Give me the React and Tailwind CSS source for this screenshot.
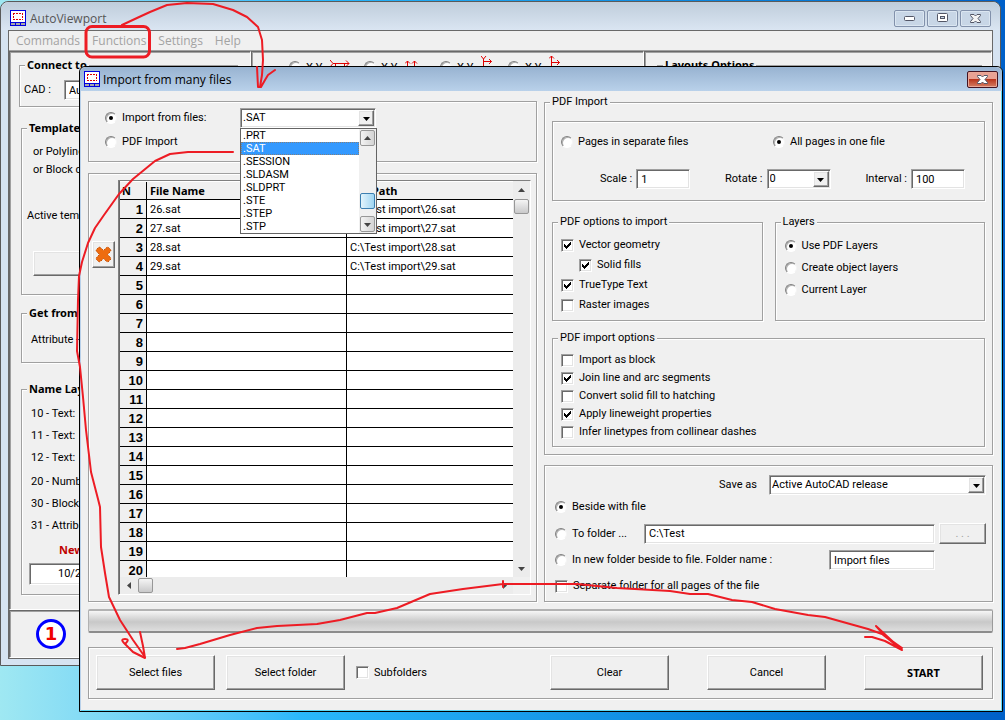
import React, { useState } from "react";

const SUNKEN =
  "border border-t-[#a0a0a0] border-l-[#a0a0a0] border-r-white border-b-white shadow-[inset_1px_1px_0_#696969,inset_-1px_-1px_0_#e3e3e3]";
const RAISED =
  "border border-t-white border-l-white border-r-[#696969] border-b-[#696969] shadow-[inset_-1px_-1px_0_#a0a0a0,inset_1px_1px_0_#e3e3e3]";
const ETCHED =
  "border border-[#a0a0a0] shadow-[1px_1px_0_#fff,inset_1px_1px_0_#fff]";
const BOLD = "font-['Noto_Sans','Open_Sans',sans-serif] font-bold";
const CAPTION = "font-['Open_Sans','Noto_Sans',sans-serif] text-[12px]";

const formats = [
  ".PRT",
  ".SAT",
  ".SESSION",
  ".SLDASM",
  ".SLDPRT",
  ".STE",
  ".STEP",
  ".STP",
];

const files = [
  { name: "26.sat", path: "C:\\Test import\\26.sat" },
  { name: "27.sat", path: "C:\\Test import\\27.sat" },
  { name: "28.sat", path: "C:\\Test import\\28.sat" },
  { name: "29.sat", path: "C:\\Test import\\29.sat" },
];

const rows = Array.from({ length: 20 }, (_, i) => files[i] || {});

const AppIcon = () => (
  <svg width="16" height="16" viewBox="0 0 16 16" shapeRendering="crispEdges">
    <rect x="0.5" y="0.5" width="15" height="15" fill="#fff" stroke="#0000e0" />
    <path
      d="M3 3.500h2M6 3.500h2M9 3.500h2M12 3.500h1M3 9.500h2M6 9.500h2M9 9.500h2M12 9.500h1M3.500 4v1M3.500 6v2M12.500 4v1M12.500 6v2"
      stroke="#e00000"
    />
    <path d="M0 12.500h16" stroke="#0000e0" />
    <path d="M1 14h4M6 14h4M11 14h4" stroke="#a8a8a8" strokeWidth="2" />
    <path d="M5.500 12v4M10.500 12v4" stroke="#0000e0" />
  </svg>
);

const Arrow = ({ dir = "down", size = 7 }) => {
  const d = {
    down: "M0 2h7L3.5 6z",
    up: "M0 5h7L3.5 1z",
    left: "M5 0v7L1 3.5z",
    right: "M2 0v7l4-3.5z",
  };
  return (
    <svg width={size} height={size} viewBox="0 0 7 7" className="shrink-0">
      <path d={d[dir]} fill="currentColor" />
    </svg>
  );
};

const CloseGlyph = ({ fill }) => (
  <svg width="13" height="11" viewBox="0 0 13 11">
    <path
      d="M1.500 1.500h3.500l1.500 1.500 1.500-1.500h3.500v1L9 5.500l2.500 3v1H8L6.500 8 5 9.500H1.500v-1L4 5.500l-2.500-3z"
      fill={fill}
      stroke="#535666"
    />
  </svg>
);

const Check = ({ label, checked = false, className = "" }) => (
  <label className={`flex items-center gap-[5px] whitespace-nowrap ${className}`}>
    <span className="relative h-[13px] w-[13px] shrink-0">
      <input
        type="checkbox"
        defaultChecked={checked}
        className={`peer block h-[13px] w-[13px] appearance-none bg-white ${SUNKEN}`}
      />
      <svg
        viewBox="0 0 13 13"
        shapeRendering="crispEdges"
        className="pointer-events-none absolute inset-0 hidden peer-checked:block"
      >
        <path
          d="M3 5h1v1h1v1h1v-1h1v-1h1v-1h1v-1h1v3h-1v1h-1v1h-1v1h-1v1h-1v-1h-1v-1h-1z"
          fill="#000"
        />
      </svg>
    </span>
    {label}
  </label>
);

const Radio = ({ label, name, checked = false, className = "" }) => (
  <label className={`flex items-center gap-[5px] whitespace-nowrap ${className}`}>
    <span className="relative h-3 w-3 shrink-0">
      <input
        type="radio"
        name={name}
        defaultChecked={checked}
        className="peer block h-3 w-3 appearance-none rounded-full border border-t-[#808080] border-r-[#f4f4f4] border-b-white border-l-[#808080] bg-white shadow-[inset_1px_1px_0_#b0b0b0]"
      />
      <span className="pointer-events-none absolute top-1 left-1 hidden h-1 w-1 rounded-full bg-black peer-checked:block" />
    </span>
    {label}
  </label>
);

// Padding lives on the inner div so that the legend always starts at the same inset
const Group = ({ title, bold, className = "", inner = "", children }) => (
  <fieldset className={`min-w-0 ${ETCHED} ${className}`}>
    <legend
      className={`ml-[5px] bg-[#f0f0f0] px-[2px] leading-[14px] whitespace-nowrap ${bold ? BOLD : ""}`}
    >
      {title}
    </legend>
    <div className={inner}>{children}</div>
  </fieldset>
);

const Combo = ({ options, label, className = "" }) => (
  <span className={`relative block h-5 bg-white ${SUNKEN} ${className}`}>
    <select
      aria-label={label}
      defaultValue={options[0]}
      className="block h-full w-full appearance-none bg-transparent pl-[2px] outline-none"
    >
      {options.map((option) => (
        <option key={option}>{option}</option>
      ))}
    </select>
    <span
      className={`pointer-events-none absolute top-[1px] right-[1px] bottom-[1px] flex w-4 items-center justify-center bg-[#f0f0f0] ${RAISED}`}
    >
      <Arrow />
    </span>
  </span>
);

const TextBox = ({ className = "", ...props }) => (
  <input
    type="text"
    className={`h-5 min-w-0 bg-white pl-1 outline-none ${SUNKEN} ${className}`}
    {...props}
  />
);

const PushButton = ({ className = "", children }) => (
  <button
    type="button"
    className={`h-[35px] w-[119px] shrink-0 bg-[#f0f0f0] ${RAISED} ${className}`}
  >
    {children}
  </button>
);

const Thumb = ({ className = "" }) => (
  <span
    className={`block h-[15px] w-[15px] rounded-xs border border-[#979797] bg-linear-to-b from-[#f5f5f5] to-[#c9c9ca] ${className}`}
  />
);

const FormatList = () => {
  const [selected, setSelected] = useState(".SAT");

  return (
    <div className="absolute top-full left-0 z-10 flex w-[137px] border border-[#646464] bg-white">
      <ul role="listbox" aria-label="File format" className="min-w-0 flex-1">
        {formats.map((format) => (
          <li
            key={format}
            role="option"
            aria-selected={format === selected}
            onClick={() => setSelected(format)}
            className={`h-[13px] pl-[2px] leading-[13px] ${
              format === selected
                ? "bg-[#3399ff] text-white outline-1 -outline-offset-1 outline-dotted outline-[#cc6600]/50"
                : ""
            }`}
          >
            {format}
          </li>
        ))}
      </ul>
      <div className="flex w-[17px] flex-col items-center justify-between bg-[#f0f0f0] py-[1px] text-[#444]">
        <button type="button" aria-label="Scroll up" className="flex h-4 w-[15px] items-center justify-center rounded-xs border border-[#979797] bg-linear-to-r from-[#f3f3f3] to-[#d4d4d4]">
          <Arrow dir="up" />
        </button>
        <span className="mt-10 block h-4 w-[15px] rounded-xs border border-[#3c7fb1] bg-linear-to-r from-[#e3f4fc] to-[#9fd5f2]" />
        <button type="button" aria-label="Scroll down" className="flex h-4 w-[15px] items-center justify-center rounded-xs border border-[#979797] bg-linear-to-r from-[#f3f3f3] to-[#d4d4d4]">
          <Arrow />
        </button>
      </div>
    </div>
  );
};

const FileTable = () => (
  <div className="min-w-0 flex-1 border-t border-l border-t-[#808080] border-l-[#808080] border-r border-b border-r-white border-b-white pl-[1px] shadow-[inset_1px_1px_0_#696969]">
    <div className="flex">
      <div className="h-[396px] min-w-0 flex-1 overflow-hidden bg-white pt-[1px]">
        <table className="w-full table-fixed border-separate border-spacing-0 text-left">
          <thead>
            <tr className={`bg-[#f0f0f0] ${BOLD}`}>
              <th className="h-[18px] w-[27px] border-r border-b border-black pl-[2px]">N</th>
              <th className="w-[200px] border-r border-b border-black pl-[3px]">File Name</th>
              <th className="border-b border-black pl-[3px]">File Path</th>
            </tr>
          </thead>
          <tbody>
            {rows.map((file, i) => (
              <tr key={i}>
                <td className="h-[19px] border-r border-b border-black bg-[#f0f0f0] pt-[1px] pr-[3px] text-right font-['Liberation_Sans',Arial,sans-serif] text-[13px] leading-[17px] font-bold">
                  {i + 1}
                </td>
                <td className="border-r border-b border-black pt-[1px] pl-[3px]">{file.name}</td>
                <td className="border-b border-black pt-[1px] pl-[3px]">{file.path}</td>
              </tr>
            ))}
          </tbody>
        </table>
      </div>
      <div className="flex w-[17px] flex-col items-center bg-[#ececec] text-[#444]">
        <button type="button" aria-label="Scroll up" className="flex h-[18px] w-full items-center justify-center">
          <Arrow dir="up" />
        </button>
        <Thumb />
        <button type="button" aria-label="Scroll down" className="mt-auto flex h-[17px] w-full items-center justify-center">
          <Arrow />
        </button>
      </div>
    </div>
    <div className="mr-[17px] flex h-[17px] items-center bg-[#ececec] text-[#444]">
      <button type="button" aria-label="Scroll left" className="flex h-full w-[18px] items-center justify-center">
        <Arrow dir="left" />
      </button>
      <Thumb />
      <button type="button" aria-label="Scroll right" className="ml-auto flex h-full w-[17px] items-center justify-center">
        <Arrow dir="right" />
      </button>
    </div>
  </div>
);

const PdfImport = () => (
  <Group title="PDF Import" inner="px-[7px] pt-3 pb-[7px]">
    <div className={`pt-[10px] pr-[19px] pb-[11px] pl-2 ${ETCHED}`}>
      <div className="flex h-5 items-center">
        <Radio name="pages" label="Pages in separate files" className="w-[212px]" />
        <Radio name="pages" label="All pages in one file" checked />
      </div>
      <div className="mt-[17px] flex items-center justify-between pl-[39px]">
        <label className="flex items-center gap-1">
          Scale : <TextBox defaultValue="1" className="w-[54px]" />
        </label>
        <label className="flex items-center gap-1">
          Rotate : <Combo label="Rotate" options={["0", "90", "180"]} className="w-16" />
        </label>
        <label className="flex items-center gap-1">
          Interval : <TextBox defaultValue="100" className="w-[54px]" />
        </label>
      </div>
    </div>

    <div className="mt-[14px] grid grid-cols-2 gap-3">
      <Group title="PDF options to import" inner="px-2 pt-[6px] pb-[5px]">
        <Check label="Vector geometry" checked className="h-5" />
        <Check label="Solid fills" checked className="ml-[18px] h-5" />
        <Check label="TrueType Text" checked className="h-5" />
        <Check label="Raster images" className="h-5" />
      </Group>
      <Group title="Layers" inner="px-[9px] pt-[6px] pb-[5px]">
        <Radio name="layers" label="Use PDF Layers" checked className="h-[22px]" />
        <Radio name="layers" label="Create object layers" className="h-[22px]" />
        <Radio name="layers" label="Current Layer" className="h-[22px]" />
      </Group>
    </div>

    <Group title="PDF import options" className="mt-[10px]" inner="px-2 pt-[6px] pb-[5px]">
      <Check label="Import as block" className="h-[18px]" />
      <Check label="Join line and arc segments" checked className="h-[18px]" />
      <Check label="Convert solid fill to hatching" className="h-[18px]" />
      <Check label="Apply lineweight properties" checked className="h-[18px]" />
      <Check label="Infer linetypes from collinear dashes" className="h-[18px]" />
    </Group>
  </Group>
);

const SaveOptions = () => (
  <div className={`mt-[10px] pt-[9px] pr-[6px] pb-[5px] pl-[10px] ${ETCHED}`}>
    <div className="flex items-center justify-end gap-3">
      <span>Save as</span>
      <Combo label="Save as" options={["Active AutoCAD release"]} className="w-[217px]" />
    </div>
    <Radio name="target" label="Beside with file" checked className="mt-[2px] h-5" />
    <div className="mt-[6px] flex items-center gap-1">
      <Radio name="target" label="To folder ..." className="w-[85px]" />
      <TextBox aria-label="Folder" defaultValue="C:\Test" className="flex-1" />
      <button type="button" className={`h-[21px] w-[47px] bg-[#f0f0f0] leading-3 text-[#a0a0a0] ${RAISED}`}>
        . . .
      </button>
    </div>
    <div className="mt-[6px] mr-[51px] flex items-center justify-between">
      <Radio name="target" label="In new folder beside to file. Folder name :" />
      <TextBox aria-label="Folder name" defaultValue="Import files" className="w-[106px]" />
    </div>
    <Check label="Separate folder for all pages of the file" className="mt-[6px] h-5" />
  </div>
);

const ImportDialog = () => (
  <section className="absolute top-[66px] right-[2px] left-[79px] rounded-t-md border border-black bg-[#f0f0f0] shadow-[inset_1px_0_0_#b9d1ea,inset_-1px_-1px_0_#5fd8f5]">
    <header className="flex h-6 items-center gap-[3px] rounded-t-md bg-linear-to-b from-[#98b3d1] to-[#b9d1ea] pr-1 pl-1">
      <AppIcon />
      <h2 className={`${CAPTION} pt-[1px] text-black`}>Import from many files</h2>
      <button
        type="button"
        aria-label="Close"
        className="ml-auto flex h-[17px] w-[31px] items-center justify-center rounded-xs border border-[#431422] bg-linear-to-b from-[#e8a294] from-45% via-[#b9351c] via-50% to-[#d37c62] shadow-[inset_0_0_0_1px_#e9a898]"
      >
        <CloseGlyph fill="#ffffff" />
      </button>
    </header>

    <div className="pt-1 pr-[9px] pb-3 pl-2">
      <div className="grid grid-cols-2 gap-[7px]">
        <div className="flex flex-col pt-[6px]">
          <div className={`flex pt-[6px] pb-[9px] pl-4 ${ETCHED}`}>
            <div className="w-[135px]">
              <Radio name="source" label="Import from files:" checked className="h-5" />
              <Radio name="source" label="PDF Import" className="mt-1 h-5" />
            </div>
            <div className="relative h-5 w-[136px]">
              <Combo label="Format" options={[".SAT", ...formats.filter((f) => f !== ".SAT")]} />
              <FormatList />
            </div>
          </div>

          <div className={`mt-[11px] flex flex-1 gap-[3px] pt-[6px] pr-[5px] pb-[6px] pl-[3px] ${ETCHED}`}>
            <button
              type="button"
              aria-label="Remove file"
              className={`mt-[61px] flex h-[27px] w-[23px] shrink-0 items-center justify-center ${RAISED}`}
            >
              <svg width="17" height="17" viewBox="0 0 17 17">
                <path
                  d="M4 1l2 1 2.500 2.500L11 2l2-1 3 3-1 2-2.500 2.500L15 11l1 2-3 3-2-1-2.500-2.500L6 15l-2 1-3-3 1-2 2.500-2.500L2 6 1 4z"
                  fill="#ee6c10"
                  stroke="#c8540c"
                  strokeDasharray="2 1"
                  strokeLinejoin="round"
                />
              </svg>
            </button>
            <FileTable />
          </div>
        </div>

        <div>
          <PdfImport />
          <SaveOptions />
        </div>
      </div>

      <div
        role="progressbar"
        aria-label="Import progress"
        aria-valuenow={0}
        className="mt-[7px] h-6 rounded-xs border border-y-2 border-t-[#b2b2b2] border-r-[#9a9a9a] border-b-[#8c8c8c] border-l-[#b2b2b2] bg-linear-to-b from-[#f6f6f6] via-[#c8c8c8] via-55% to-[#dedede]"
      />

      <footer className={`mt-[14px] flex items-center gap-[11px] pt-[7px] pr-[9px] pb-2 pl-[7px] ${ETCHED}`}>
        <PushButton>Select files</PushButton>
        <PushButton>Select folder</PushButton>
        <Check label="Subfolders" />
        <div className="ml-auto flex gap-[38px]">
          <PushButton>Clear</PushButton>
          <PushButton>Cancel</PushButton>
          <PushButton className={BOLD}>START</PushButton>
        </div>
      </footer>
    </div>
  </section>
);

const axes = [
  { d: "M0 4l3 3.500L0 11M3 7.500h16M16 4.500l3 3-3 3M5.500 8v5M14.500 8v5", width: "w-[75px]" },
  { d: "M2.500 13V5M0 7.500L2.500 5 5 7.500M9.500 13V5M7 7.500L9.500 5 12 7.500", width: "w-[76px]" },
  { d: "M0 0l2.500 3L5 0M2.500 3v9M2.500 5.500h8M8 3l2.500 2.500L8 8", width: "w-[68px]" },
  { d: "M2.500 12V0M0 2.500L2.500 0 5 2.500M2.500 6.500h8M8 4l2.500 2.500L8 9", width: "w-[68px]" },
];

const PANEL =
  "border border-t-[#696969] border-l-[#696969] border-r-white border-b-white shadow-[inset_1px_1px_0_#a0a0a0]";
const CAPTION_BUTTON =
  "flex h-[17px] w-[31px] items-center justify-center rounded-xs border border-[#8291ab] bg-[#c8d6e6] shadow-[inset_0_0_0_1px_#dbe6f1]";

const MainWindow = () => (
  <section className="absolute top-[1px] right-1 left-0 rounded-t-lg border border-[#5a5a5a] bg-[#d6e3f1] px-[7px] pb-[6px]">
    <header className="-mx-[7px] flex h-7 items-center gap-1 rounded-t-lg bg-linear-to-b from-[#bfcddb] to-[#dae5f2] px-[9px] pt-1">
      <AppIcon />
      <h1 className={`${CAPTION} pt-[1px] text-[#555]`}>AutoViewport</h1>
      <div className="ml-auto flex gap-[2px]">
        <button type="button" aria-label="Minimize" className={CAPTION_BUTTON}>
          <svg width="12" height="6" viewBox="0 0 12 6">
            <rect x="0.5" y="1.500" width="10" height="4" rx="1" fill="#fff" stroke="#535666" />
          </svg>
        </button>
        <button type="button" aria-label="Maximize" className={CAPTION_BUTTON}>
          <svg width="12" height="10" viewBox="0 0 12 10">
            <rect x="0.5" y="0.5" width="10" height="8" rx="1" fill="#fff" stroke="#535666" />
            <rect x="3.500" y="3.500" width="4" height="2" fill="#c8d6e6" stroke="#535666" />
          </svg>
        </button>
        <button type="button" aria-label="Close window" className={CAPTION_BUTTON}>
          <CloseGlyph fill="#f4f4f4" />
        </button>
      </div>
    </header>

    <div className="border border-[#696969] bg-[#f0f0f0]">
      <nav className="flex h-5 items-center gap-3 border-b border-[#a0a0a0] pl-[7px] font-['Open_Sans',sans-serif] text-[12px] text-[#a3a3a3]">
        <button type="button">Commands</button>
        <button type="button">Functions</button>
        <button type="button">Settings</button>
        <button type="button">Help</button>
      </nav>

      <div className="flex">
        <div className={`w-[242px] overflow-hidden pt-[6px] pr-3 pb-[14px] pl-[9px] ${PANEL}`}>
          <Group title="Connect to" bold inner="pt-2 pb-[6px] pl-1">
            <label className="flex items-center gap-[13px]">
              CAD : <TextBox defaultValue="AutoCAD" className="flex-1" />
            </label>
          </Group>
          <Group title="Template" bold className="mt-[14px] ml-[2px]" inner="pt-2 pb-[18px] pl-[5px] leading-[18px]">
            <p className="pl-[6px]">or Polyline</p>
            <p className="pl-[6px]">or Block contour</p>
            <p className="mt-7">Active template</p>
            <button type="button" aria-label="Pick template" className={`mt-[26px] ml-[6px] block h-[25px] w-[150px] ${RAISED}`} />
          </Group>
          <Group title="Get from" bold className="mt-[11px] ml-[2px]" inner="pt-[11px] pb-[13px] pl-[9px] leading-[18px]">
            <p>Attribute -</p>
          </Group>
          <Group title="Name Layouts" bold className="mt-[19px] ml-[2px]" inner="pt-[7px] pr-2 pb-[9px] pl-[7px] leading-[22px]">
            <div className="pl-[2px]">
              <p>10 - Text:</p>
              <p>11 - Text:</p>
              <p>12 - Text:</p>
              <p className="mt-[2px]">20 - Number</p>
              <p>30 - Block</p>
              <p>31 - Attribute</p>
              <p className={`mt-[2px] pl-7 text-[#c00000] ${BOLD}`}>New</p>
            </div>
            <input
              type="text"
              aria-label="New name"
              defaultValue="10/2"
              className={`mt-[2px] block h-[22px] w-full bg-white pl-7 outline-none ${SUNKEN}`}
            />
          </Group>
        </div>

        <div className={`flex flex-1 items-start overflow-hidden pt-[7px] pl-[37px] ${PANEL}`}>
          {axes.map((axis, i) => (
            <div key={i} className={`flex items-start ${axis.width}`}>
              <Radio name="axes" label={<span className="pt-[2px]">X-Y</span>} />
              <svg width="20" height="13" viewBox="0 0 20 13" fill="none" stroke="#e00000" className="-mt-[3px] ml-2">
                <path d={axis.d} />
              </svg>
            </div>
          ))}
        </div>

        <div className={`w-[348px] pt-[6px] pr-[9px] pl-3 ${PANEL}`}>
          <Group title="Layouts Options" bold className="h-20" />
        </div>
      </div>

      <div className={`h-12 pt-2 pl-[26px] ${PANEL}`}>
        <span className="flex h-[30px] w-[30px] items-center justify-center rounded-full border-3 border-[#0000ff] bg-white font-['DejaVu_Sans',sans-serif] text-[18px] leading-none font-bold text-[#f00000]">
          1
        </span>
      </div>
    </div>
  </section>
);

// Hand-drawn pen marks that walk through the steps
const PenMarks = () => (
  <svg
    width="1005"
    height="720"
    viewBox="0 0 1005 720"
    fill="none"
    stroke="#ed1c24"
    strokeWidth="2"
    strokeLinecap="round"
    strokeLinejoin="round"
    className="pointer-events-none absolute top-0 left-0 z-20"
  >
    <rect x="86" y="26.500" width="63.500" height="30.500" rx="6" strokeWidth="3" />
    <path d="M122 25L137 18 150 12 167 5 187 3 213 4 233 10 247 17 258 27 262 40 263 60 262 75 260 87M257 67L258 87 261 87 265 80 268 75 275 70" />
    <path d="M233 152H188L170 154 155 161 133 179 119 194 104 215 95 228 88 243 82 262 79 276 78 300 77 351 80 367 83 397 86 430 89 455 91 472 98 499 100 507 101 547 105 573 109 597 120 620 133 640 145 657M140 632L143 646 145 658 133 652 124 643Q120 639 125 639T126 643" />
    <path d="M177 649L185 648 200 644 230 635 257 628 277 626 317 624 340 620 367 613 375 613 397 608 430 594 463 589 503 584H577L617 588 670 591 690 594H708L732 600 752 602 775 609 808 615 825 617 868 629 882 634 901 649M503 581v6M865 637H872L885 641 902 650 890 639 876 626 885 636 902 648" />
  </svg>
);

export default function App() {
  return (
    <main className="relative min-h-screen overflow-hidden bg-[#0a66cc] bg-linear-to-r from-[#9fe8f2] via-[#2ab8fb] via-30% to-[#0060c8] font-[Roboto,'Liberation_Sans',sans-serif] text-[11px] leading-[14px] text-black">
      <MainWindow />
      <ImportDialog />
      <PenMarks />
    </main>
  );
}
